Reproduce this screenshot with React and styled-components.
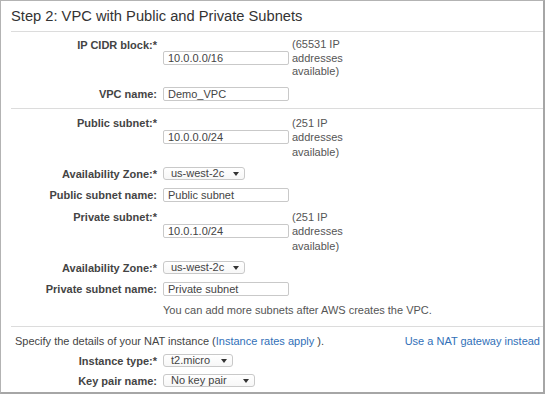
import React from "react";
import styled, { createGlobalStyle } from "styled-components";

const Global = createGlobalStyle`
  html, body { margin: 0; padding: 0; background: #fff; }
  body { font-family: "Liberation Sans", Arial, sans-serif; font-size: 11px; color: #444; }
`;

const Frame = styled.div`
  box-sizing: border-box;
  width: 545px;
  height: 394px;
  border-left: 1px solid #b3b3b3;
  border-top: 1px solid #b3b3b3;
  border-right: 2px solid #a6a6a6;
  border-bottom: 2px solid #a6a6a6;
  background: #fff;
  display: flex;
  flex-direction: column;
`;

const Title = styled.h2`
  margin: 0 0 0 10px;
  padding: 5px 0 4px;
  font-size: 14.7px;
  line-height: 21px;
  font-weight: normal;
  color: #333;
  border-bottom: 1px solid #dcdcdc;
`;

const Section = styled.div`
  margin-left: 10px;
  padding: ${(p) => p.$pad};
  display: flex;
  flex-direction: column;
  gap: ${(p) => p.$gap}px;
  border-bottom: ${(p) => (p.$last ? "none" : "1px solid #dcdcdc")};
`;

const Row = styled.div`
  display: flex;
  align-items: center;
`;

const Label = styled.label`
  width: 146px;
  margin-right: 6px;
  flex: none;
  text-align: right;
  font-weight: bold;
  color: #444;
  line-height: 14px;
  align-self: ${(p) => (p.$top ? "flex-start" : "center")};
`;

const Input = styled.input`
  box-sizing: border-box;
  width: 126px;
  height: 14px;
  padding: 0 4px;
  margin: 0;
  border: 1px solid #c9c9c9;
  border-radius: 2px;
  font-family: "Liberation Sans", Arial, sans-serif;
  font-size: 11px;
  color: #444;
  background: #fff;
  outline: none;
`;

const Info = styled.div`
  margin-left: 3px;
  line-height: ${(p) => p.$lh}px;
  color: #555;
  align-self: flex-start;
`;

const SelectBox = styled.div`
  box-sizing: border-box;
  width: ${(p) => p.$w}px;
  height: 13px;
  padding: 0 5px 0 7px;
  border: 1px solid #c9c9c9;
  border-radius: 3px;
  background: linear-gradient(#fff, #f7f7f7);
  display: flex;
  align-items: center;
  justify-content: space-between;
  color: #444;
  line-height: 11px;
`;

const Note = styled.div`
  margin-left: 152px;
  line-height: 12px;
  color: #555;
`;

const NatLine = styled.div`
  display: flex;
  justify-content: space-between;
  padding: 0 3px 0 4px;
  line-height: 14px;
  color: #444;
`;

const Link = styled.a`
  color: #3170b8;
  text-decoration: none;
`;

const Arrow = () => (
  <svg width="6" height="4" viewBox="0 0 6 4">
    <polygon points="0,0 6,0 3,4" fill="#333" />
  </svg>
);

const Select = ({ w, value }) => (
  <SelectBox $w={w} role="combobox">
    <span>{value}</span>
    <Arrow />
  </SelectBox>
);

const Field = ({ value }) => <Input readOnly value={value} />;

const SubnetRow = ({ label, value, count, lh }) => (
  <Row>
    <Label $top>{label}</Label>
    <Field value={value} />
    <Info $lh={lh}>
      ({count} IP
      <br />
      addresses
      <br />
      available)
    </Info>
  </Row>
);

export default function App() {
  return (
    <>
      <Global />
      <Frame>
        <Title>Step 2: VPC with Public and Private Subnets</Title>

        <Section $pad="6px 0 6.5px" $gap={8.5}>
          <SubnetRow label="IP CIDR block:*" value="10.0.0.0/16" count="65531" lh={13.5} />
          <Row>
            <Label>VPC name:</Label>
            <Field value="Demo_VPC" />
          </Row>
        </Section>

        <Section $pad="7px 0 10px" $gap={7.5}>
          <SubnetRow label="Public subnet:*" value="10.0.0.0/24" count="251" lh={14.5} />
          <Row>
            <Label>Availability Zone:*</Label>
            <Select w={82} value="us-west-2c" />
          </Row>
          <Row>
            <Label>Public subnet name:</Label>
            <Field value="Public subnet" />
          </Row>
          <SubnetRow label="Private subnet:*" value="10.0.1.0/24" count="251" lh={14.5} />
          <Row>
            <Label>Availability Zone:*</Label>
            <Select w={82} value="us-west-2c" />
          </Row>
          <Row>
            <Label>Private subnet name:</Label>
            <Field value="Private subnet" />
          </Row>
          <Note>You can add more subnets after AWS creates the VPC.</Note>
        </Section>

        <Section $pad="7px 0 0" $gap={6} $last>
          <NatLine>
            <span>
              Specify the details of your NAT instance (<Link href="#">Instance rates apply</Link> ).
            </span>
            <Link href="#">Use a NAT gateway instead</Link>
          </NatLine>
          <Row>
            <Label>Instance type:*</Label>
            <Select w={70} value="t2.micro" />
          </Row>
          <Row>
            <Label>Key pair name:</Label>
            <Select w={92} value="No key pair" />
          </Row>
        </Section>
      </Frame>
    </>
  );
}
